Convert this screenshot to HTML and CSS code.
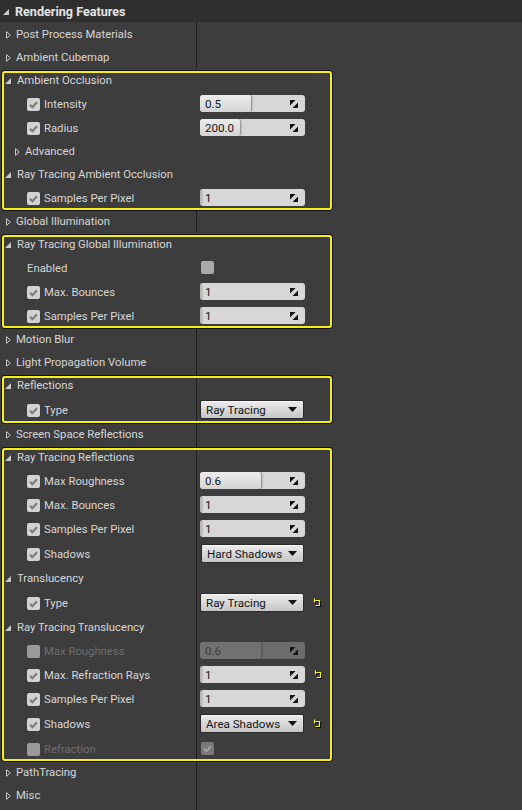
FILE: index.html
```html
<!DOCTYPE html>
<html>
<head>
<meta charset="utf-8">
<link rel="stylesheet" href="styles.css">
</head>
<body>
<div class="panel">
  <div class="title"><svg class="tri" width="6" height="6" viewBox="0 0 6 6"><path d="M6 0V6H0Z" fill="#cfcfcf"/></svg><span>Rendering Features</span></div>

  <div class="row cat"><div class="name"><svg class="tri-c" width="5" height="8" viewBox="0 0 5 8"><path d="M0.5 0.7L4.3 4L0.5 7.3Z" fill="none" stroke="#c8c8c8" stroke-width="1"/></svg>Post Process Materials</div><div class="val"></div></div>
  <div class="row cat"><div class="name"><svg class="tri-c" width="5" height="8" viewBox="0 0 5 8"><path d="M0.5 0.7L4.3 4L0.5 7.3Z" fill="none" stroke="#c8c8c8" stroke-width="1"/></svg>Ambient Cubemap</div><div class="val"></div></div>

  <div class="hl nodiv">
    <div class="row cat"><div class="name"><svg class="tri" width="6" height="6" viewBox="0 0 6 6"><path d="M6 0V6H0Z" fill="#c8c8c8"/></svg>Ambient Occlusion</div><div class="val"></div></div>
    <div class="row prop"><div class="name"><span class="cb on"><svg width="13" height="13" viewBox="0 0 13 13"><path d="M3 6.8L5.4 9.2L10 4.2" fill="none" stroke="#7c7c7c" stroke-width="2.2"/></svg></span>Intensity</div><div class="val"><div class="num" style="--fill:52px"><span class="nv">0.5</span><svg class="spin" width="8" height="8" viewBox="0 0 8 8"><path d="M0 0H5.5L0 5.5Z M8 2.5V8H2.5Z" fill="#111"/></svg></div></div></div>
    <div class="row prop"><div class="name"><span class="cb on"><svg width="13" height="13" viewBox="0 0 13 13"><path d="M3 6.8L5.4 9.2L10 4.2" fill="none" stroke="#7c7c7c" stroke-width="2.2"/></svg></span>Radius</div><div class="val"><div class="num" style="--fill:41px"><span class="nv">200.0</span><svg class="spin" width="8" height="8" viewBox="0 0 8 8"><path d="M0 0H5.5L0 5.5Z M8 2.5V8H2.5Z" fill="#111"/></svg></div></div></div>
    <div class="row cat"><div class="name sub"><svg class="tri-c" width="5" height="8" viewBox="0 0 5 8"><path d="M0.5 0.7L4.3 4L0.5 7.3Z" fill="none" stroke="#c8c8c8" stroke-width="1"/></svg>Advanced</div><div class="val"></div></div>
    <div class="row cat"><div class="name"><svg class="tri" width="6" height="6" viewBox="0 0 6 6"><path d="M6 0V6H0Z" fill="#c8c8c8"/></svg>Ray Tracing Ambient Occlusion</div><div class="val"></div></div>
    <div class="row prop"><div class="name"><span class="cb on"><svg width="13" height="13" viewBox="0 0 13 13"><path d="M3 6.8L5.4 9.2L10 4.2" fill="none" stroke="#7c7c7c" stroke-width="2.2"/></svg></span>Samples Per Pixel</div><div class="val"><div class="num min" style="--fill:3px"><span class="nv">1</span><svg class="spin" width="8" height="8" viewBox="0 0 8 8"><path d="M0 0H5.5L0 5.5Z M8 2.5V8H2.5Z" fill="#111"/></svg></div></div></div>
  </div>

  <div class="row cat"><div class="name"><svg class="tri-c" width="5" height="8" viewBox="0 0 5 8"><path d="M0.5 0.7L4.3 4L0.5 7.3Z" fill="none" stroke="#c8c8c8" stroke-width="1"/></svg>Global Illumination</div><div class="val"></div></div>

  <div class="hl nodiv">
    <div class="row cat"><div class="name"><svg class="tri" width="6" height="6" viewBox="0 0 6 6"><path d="M6 0V6H0Z" fill="#c8c8c8"/></svg>Ray Tracing Global Illumination</div><div class="val"></div></div>
    <div class="row prop"><div class="name nocb">Enabled</div><div class="val"><span class="cb vcb off"></span></div></div>
    <div class="row prop"><div class="name"><span class="cb on"><svg width="13" height="13" viewBox="0 0 13 13"><path d="M3 6.8L5.4 9.2L10 4.2" fill="none" stroke="#7c7c7c" stroke-width="2.2"/></svg></span>Max. Bounces</div><div class="val"><div class="num min" style="--fill:3px"><span class="nv">1</span><svg class="spin" width="8" height="8" viewBox="0 0 8 8"><path d="M0 0H5.5L0 5.5Z M8 2.5V8H2.5Z" fill="#111"/></svg></div></div></div>
    <div class="row prop"><div class="name"><span class="cb on"><svg width="13" height="13" viewBox="0 0 13 13"><path d="M3 6.8L5.4 9.2L10 4.2" fill="none" stroke="#7c7c7c" stroke-width="2.2"/></svg></span>Samples Per Pixel</div><div class="val"><div class="num min" style="--fill:3px"><span class="nv">1</span><svg class="spin" width="8" height="8" viewBox="0 0 8 8"><path d="M0 0H5.5L0 5.5Z M8 2.5V8H2.5Z" fill="#111"/></svg></div></div></div>
  </div>

  <div class="row cat"><div class="name"><svg class="tri-c" width="5" height="8" viewBox="0 0 5 8"><path d="M0.5 0.7L4.3 4L0.5 7.3Z" fill="none" stroke="#c8c8c8" stroke-width="1"/></svg>Motion Blur</div><div class="val"></div></div>
  <div class="row cat"><div class="name"><svg class="tri-c" width="5" height="8" viewBox="0 0 5 8"><path d="M0.5 0.7L4.3 4L0.5 7.3Z" fill="none" stroke="#c8c8c8" stroke-width="1"/></svg>Light Propagation Volume</div><div class="val"></div></div>

  <div class="hl">
    <div class="row cat"><div class="name"><svg class="tri" width="6" height="6" viewBox="0 0 6 6"><path d="M6 0V6H0Z" fill="#c8c8c8"/></svg>Reflections</div><div class="val"></div></div>
    <div class="row prop combo"><div class="name"><span class="cb on"><svg width="13" height="13" viewBox="0 0 13 13"><path d="M3 6.8L5.4 9.2L10 4.2" fill="none" stroke="#7c7c7c" stroke-width="2.2"/></svg></span>Type</div><div class="val"><div class="dd"><span>Ray Tracing</span><svg width="9" height="5" viewBox="0 0 9 5"><path d="M0 0H9L4.5 5Z" fill="#111"/></svg></div></div></div>
  </div>

  <div class="row cat"><div class="name"><svg class="tri-c" width="5" height="8" viewBox="0 0 5 8"><path d="M0.5 0.7L4.3 4L0.5 7.3Z" fill="none" stroke="#c8c8c8" stroke-width="1"/></svg>Screen Space Reflections</div><div class="val"></div></div>

  <div class="hl">
    <div class="row cat"><div class="name"><svg class="tri" width="6" height="6" viewBox="0 0 6 6"><path d="M6 0V6H0Z" fill="#c8c8c8"/></svg>Ray Tracing Reflections</div><div class="val"></div></div>
    <div class="row prop"><div class="name"><span class="cb on"><svg width="13" height="13" viewBox="0 0 13 13"><path d="M3 6.8L5.4 9.2L10 4.2" fill="none" stroke="#7c7c7c" stroke-width="2.2"/></svg></span>Max Roughness</div><div class="val"><div class="num" style="--fill:62px"><span class="nv">0.6</span><svg class="spin" width="8" height="8" viewBox="0 0 8 8"><path d="M0 0H5.5L0 5.5Z M8 2.5V8H2.5Z" fill="#111"/></svg></div></div></div>
    <div class="row prop"><div class="name"><span class="cb on"><svg width="13" height="13" viewBox="0 0 13 13"><path d="M3 6.8L5.4 9.2L10 4.2" fill="none" stroke="#7c7c7c" stroke-width="2.2"/></svg></span>Max. Bounces</div><div class="val"><div class="num min" style="--fill:3px"><span class="nv">1</span><svg class="spin" width="8" height="8" viewBox="0 0 8 8"><path d="M0 0H5.5L0 5.5Z M8 2.5V8H2.5Z" fill="#111"/></svg></div></div></div>
    <div class="row prop"><div class="name"><span class="cb on"><svg width="13" height="13" viewBox="0 0 13 13"><path d="M3 6.8L5.4 9.2L10 4.2" fill="none" stroke="#7c7c7c" stroke-width="2.2"/></svg></span>Samples Per Pixel</div><div class="val"><div class="num min" style="--fill:3px"><span class="nv">1</span><svg class="spin" width="8" height="8" viewBox="0 0 8 8"><path d="M0 0H5.5L0 5.5Z M8 2.5V8H2.5Z" fill="#111"/></svg></div></div></div>
    <div class="row prop combo"><div class="name"><span class="cb on"><svg width="13" height="13" viewBox="0 0 13 13"><path d="M3 6.8L5.4 9.2L10 4.2" fill="none" stroke="#7c7c7c" stroke-width="2.2"/></svg></span>Shadows</div><div class="val"><div class="dd narrow"><span>Hard Shadows</span><svg width="9" height="5" viewBox="0 0 9 5"><path d="M0 0H9L4.5 5Z" fill="#111"/></svg></div></div></div>
    <div class="row cat"><div class="name"><svg class="tri" width="6" height="6" viewBox="0 0 6 6"><path d="M6 0V6H0Z" fill="#c8c8c8"/></svg>Translucency</div><div class="val"></div></div>
    <div class="row prop combo"><div class="name"><span class="cb on"><svg width="13" height="13" viewBox="0 0 13 13"><path d="M3 6.8L5.4 9.2L10 4.2" fill="none" stroke="#7c7c7c" stroke-width="2.2"/></svg></span>Type</div><div class="val"><div class="dd"><span>Ray Tracing</span><svg width="9" height="5" viewBox="0 0 9 5"><path d="M0 0H9L4.5 5Z" fill="#111"/></svg></div><svg class="reset" width="9" height="9" viewBox="0 0 9 9"><path d="M2.5 1.5V5.5M2.5 3.5H7.5V8.5H3.5" fill="none" stroke="#000" stroke-width="1.2"/><path d="M1.5 0.5V4.5M1.5 2.5H6.5V7.5H2.5" fill="none" stroke="#f4f01c" stroke-width="1.2"/></svg></div></div>
    <div class="row cat"><div class="name"><svg class="tri" width="6" height="6" viewBox="0 0 6 6"><path d="M6 0V6H0Z" fill="#c8c8c8"/></svg>Ray Tracing Translucency</div><div class="val"></div></div>
    <div class="row prop"><div class="name dis"><span class="cb dim"></span>Max Roughness</div><div class="val"><div class="num disabled" style="--fill:62px"><span class="nv">0.6</span><svg class="spin" width="8" height="8" viewBox="0 0 8 8"><path d="M0 0H5.5L0 5.5Z M8 2.5V8H2.5Z" fill="#111"/></svg></div></div></div>
    <div class="row prop"><div class="name"><span class="cb on"><svg width="13" height="13" viewBox="0 0 13 13"><path d="M3 6.8L5.4 9.2L10 4.2" fill="none" stroke="#7c7c7c" stroke-width="2.2"/></svg></span>Max. Refraction Rays</div><div class="val"><div class="num min" style="--fill:3px"><span class="nv">1</span><svg class="spin" width="8" height="8" viewBox="0 0 8 8"><path d="M0 0H5.5L0 5.5Z M8 2.5V8H2.5Z" fill="#111"/></svg></div><svg class="reset" width="9" height="9" viewBox="0 0 9 9"><path d="M2.5 1.5V5.5M2.5 3.5H7.5V8.5H3.5" fill="none" stroke="#000" stroke-width="1.2"/><path d="M1.5 0.5V4.5M1.5 2.5H6.5V7.5H2.5" fill="none" stroke="#f4f01c" stroke-width="1.2"/></svg></div></div>
    <div class="row prop"><div class="name"><span class="cb on"><svg width="13" height="13" viewBox="0 0 13 13"><path d="M3 6.8L5.4 9.2L10 4.2" fill="none" stroke="#7c7c7c" stroke-width="2.2"/></svg></span>Samples Per Pixel</div><div class="val"><div class="num min" style="--fill:3px"><span class="nv">1</span><svg class="spin" width="8" height="8" viewBox="0 0 8 8"><path d="M0 0H5.5L0 5.5Z M8 2.5V8H2.5Z" fill="#111"/></svg></div></div></div>
    <div class="row prop combo"><div class="name"><span class="cb on"><svg width="13" height="13" viewBox="0 0 13 13"><path d="M3 6.8L5.4 9.2L10 4.2" fill="none" stroke="#7c7c7c" stroke-width="2.2"/></svg></span>Shadows</div><div class="val"><div class="dd"><span>Area Shadows</span><svg width="9" height="5" viewBox="0 0 9 5"><path d="M0 0H9L4.5 5Z" fill="#111"/></svg></div><svg class="reset" width="9" height="9" viewBox="0 0 9 9"><path d="M2.5 1.5V5.5M2.5 3.5H7.5V8.5H3.5" fill="none" stroke="#000" stroke-width="1.2"/><path d="M1.5 0.5V4.5M1.5 2.5H6.5V7.5H2.5" fill="none" stroke="#f4f01c" stroke-width="1.2"/></svg></div></div>
    <div class="row prop"><div class="name dis"><span class="cb dim"></span>Refraction</div><div class="val"><span class="cb vcb dimon"><svg width="13" height="13" viewBox="0 0 13 13"><path d="M3 6.8L5.4 9.2L10 4.2" fill="none" stroke="#a2a2a2" stroke-width="2.2"/></svg></span></div></div>
  </div>

  <div class="row cat"><div class="name"><svg class="tri-c" width="5" height="8" viewBox="0 0 5 8"><path d="M0.5 0.7L4.3 4L0.5 7.3Z" fill="none" stroke="#c8c8c8" stroke-width="1"/></svg>PathTracing</div><div class="val"></div></div>
  <div class="row cat"><div class="name"><svg class="tri-c" width="5" height="8" viewBox="0 0 5 8"><path d="M0.5 0.7L4.3 4L0.5 7.3Z" fill="none" stroke="#c8c8c8" stroke-width="1"/></svg>Misc</div><div class="val"></div></div>
  <div class="row tail"><div class="name"></div><div class="val"></div></div>
</div>
</body>
</html>
```

FILE: styles.css
```css
html, body {
  margin: 0;
  padding: 0;
}
body {
  background: #3d3d3d;
  width: 522px;
  height: 810px;
  overflow: hidden;
  font-family: Roboto, "Liberation Sans", sans-serif;
  font-size: 11.3px;
  color: #d6d6d6;
}
.panel {
  display: flex;
  flex-direction: column;
}
.title {
  height: 22px;
  box-sizing: border-box;
  padding-top: 1px;
  background: #2f2f2f;
  display: flex;
  align-items: center;
  gap: 6px;
  padding-left: 3px;
  font-size: 12.6px;
  font-weight: bold;
  color: #e4e4e4;
}
.row {
  display: grid;
  grid-template-columns: 196px 1fr;
  height: 24px;
}
.row.cat {
  height: 23px;
}
.row.combo {
  height: 26px;
}
.row.tail {
  height: 10px;
}
.name {
  display: flex;
  align-items: center;
  padding-left: 5px;
  padding-top: 2px;
  white-space: nowrap;
}
.name .tri,
.name .tri-c {
  margin-right: 6px;
  flex: none;
}
.name .tri-c {
  margin-left: 1px;
  margin-right: 5px;
}
.name.sub {
  padding-left: 14px;
}
.name.nocb {
  padding-left: 27px;
}
.name.dis {
  color: #6e6e6e;
}
.val {
  border-left: 1px solid #1e1e1e;
  display: flex;
  align-items: center;
  padding-left: 3px;
  padding-top: 1px;
}
.hl {
  position: relative;
}
.hl::after {
  content: "";
  position: absolute;
  left: 2px;
  width: 330px;
  top: 3px;
  bottom: -1px;
  box-sizing: border-box;
  border: 2px solid #f6ee1a;
  border-radius: 3px;
  box-shadow: 0 0 0 1px #121212;
  pointer-events: none;
}
.hl.nodiv .val {
  border-left-color: transparent;
}
.cb {
  width: 13px;
  height: 13px;
  border-radius: 2px;
  background: #d2d2d2;
  margin-left: 22px;
  margin-right: 4px;
  display: inline-flex;
  flex: none;
}
.cb svg {
  display: block;
}
.cb.dim {
  background: #9a9a9a;
}
.cb.vcb {
  margin-left: 1px;
}
.cb.off {
  background: #a9a9a9;
}
.cb.dimon {
  background: #787878;
}
.num {
  position: relative;
  width: 105px;
  height: 17px;
  box-sizing: border-box;
  background: #d7d7d7;
  border-radius: 3px;
  display: flex;
  align-items: center;
  color: #141414;
  font-size: 11.6px;
  overflow: hidden;
}
.num::before {
  content: "";
  position: absolute;
  left: 0;
  top: 0;
  bottom: 0;
  width: var(--fill);
  box-sizing: border-box;
  background: linear-gradient(#ececec, #d4d4d4);
  border-right: 1px solid #9a9a9a;
  border-radius: 3px;
  box-shadow: 1px 0 1px rgba(0,0,0,0.12);
}
.num.min::before {
  background: #b8b8b8;
  border-right-color: #c4c4c4;
  box-shadow: none;
  border-radius: 3px 0 0 3px;
}
.num .nv {
  position: relative;
  padding-left: 5px;
}
.num .spin {
  position: relative;
  margin-left: auto;
  margin-right: 7px;
}
.num.disabled {
  background: #6c6c6c;
  color: #3e3e3e;
}
.num.disabled::before {
  background: #717171;
  border-right-color: #5a5a5a;
}
.dd {
  width: 104px;
  height: 19px;
  box-sizing: border-box;
  border: 1px solid #2b2b2b;
  border-radius: 2px;
  background: linear-gradient(#ececec, #c6c6c6);
  box-shadow: inset 0 1px 0 #f6f6f6;
  display: flex;
  align-items: center;
  justify-content: space-between;
  padding: 0 6px 0 5px;
  color: #141414;
  font-size: 11.6px;
}
.dd.narrow {
  width: 103px;
  margin-left: 1px;
}
.reset {
  margin-left: 9px;
}
```
